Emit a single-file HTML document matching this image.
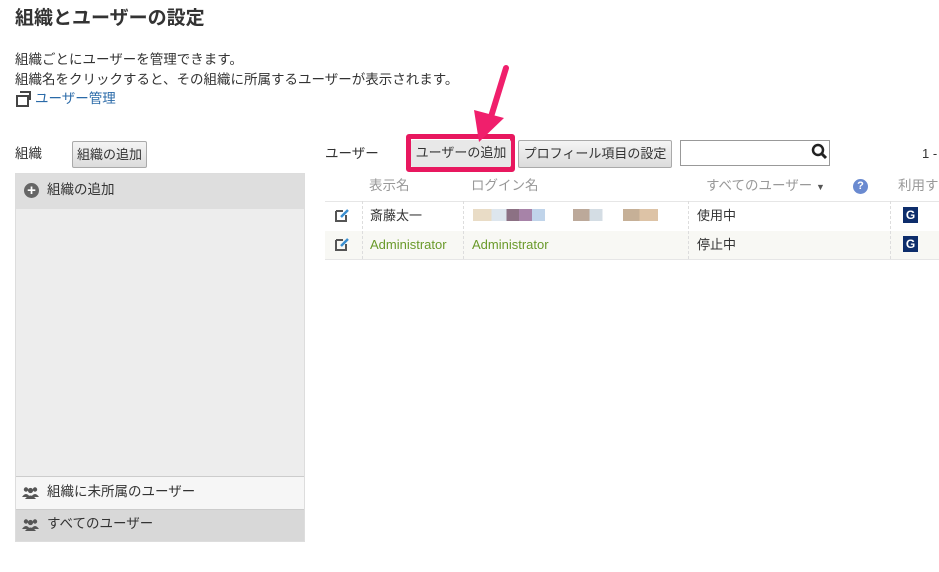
<!DOCTYPE html>
<html><head><meta charset="utf-8"><style>
body{margin:0;width:939px;height:572px;background:#fff;position:relative;overflow:hidden;font-family:"Liberation Sans","Noto Sans CJK JP",sans-serif;color:#333;font-size:13px}
.a{position:absolute;white-space:nowrap;line-height:16px}
.btn{position:absolute;border:1px solid #aaa;border-radius:2px;background:linear-gradient(#f4f4f4,#dcdcdc);font-size:13px;color:#333;text-align:center;box-sizing:border-box}
.g{display:inline-block;width:15px;height:16px;background:#0d2d6b;color:#fff;font-size:12px;font-weight:bold;text-align:center;line-height:16px}
</style></head><body>
<div class="a" style="left:15px;top:8px;font-size:19px;line-height:22px;font-weight:bold;color:#333">組織とユーザーの設定</div>
<div class="a" style="left:15px;top:50px;line-height:20px;font-size:13.5px">組織ごとにユーザーを管理できます。<br>組織名をクリックすると、その組織に所属するユーザーが表示されます。</div>
<div class="a" style="left:16px;top:95px;width:9px;height:8px;border:2px solid #444;background:#fff"></div>
<div class="a" style="left:20px;top:91px;width:9px;height:7px;border:2px solid #444;border-bottom:none;border-left:none"></div>
<div class="a" style="left:35px;top:91px;color:#2a6aa8;font-size:13.5px">ユーザー管理</div>

<div class="a" style="left:15px;top:146px;font-size:13.5px">組織</div>
<div class="btn" style="left:72px;top:141px;width:75px;height:27px;line-height:25px">組織の追加</div>
<div class="a" style="left:15px;top:173px;width:288px;height:367px;background:#ededed;border:1px solid #ddd"></div>
<div class="a" style="left:16px;top:174px;width:288px;height:35px;background:#dedede"></div>
<div class="a" style="left:24px;top:183px;width:15px;height:15px;border-radius:50%;background:#666;color:#fff;font-size:15px;line-height:15px;text-align:center;font-weight:bold">+</div>
<div class="a" style="left:47px;top:182px;font-size:13.5px">組織の追加</div>
<div class="a" style="left:16px;top:476px;width:288px;height:32px;background:#f6f6f6;border-top:1px solid #ccc;border-bottom:1px solid #ccc"></div>
<div class="a" style="left:16px;top:510px;width:288px;height:31px;background:#d8d8d8"></div>
<svg class="a" style="left:22px;top:486px" width="17" height="13"><circle cx="4" cy="3.5" r="2.2" fill="#555"/><circle cx="13" cy="3.5" r="2.2" fill="#555"/><circle cx="8.5" cy="4.5" r="2.6" fill="#555"/><path d="M0 11 Q4 5 8 11Z M9 11 Q13 5 17 11Z M3 13 Q8.5 6 14 13Z" fill="#555"/></svg>
<div class="a" style="left:47px;top:484px;font-size:13.5px">組織に未所属のユーザー</div>
<svg class="a" style="left:22px;top:518px" width="17" height="13"><circle cx="4" cy="3.5" r="2.2" fill="#555"/><circle cx="13" cy="3.5" r="2.2" fill="#555"/><circle cx="8.5" cy="4.5" r="2.6" fill="#555"/><path d="M0 11 Q4 5 8 11Z M9 11 Q13 5 17 11Z M3 13 Q8.5 6 14 13Z" fill="#555"/></svg>
<div class="a" style="left:47px;top:516px;font-size:13.5px">すべてのユーザー</div>

<div class="a" style="left:325px;top:146px;font-size:13.5px">ユーザー</div>
<div class="a" style="left:406px;top:134px;width:99px;height:28px;border:5px solid #e8185f;border-radius:3px"></div>
<div class="btn" style="left:411px;top:140px;width:100px;height:27px;line-height:25px;border:none;background:#e8e8e8">ユーザーの追加</div>
<div class="btn" style="left:518px;top:140px;width:154px;height:28px;line-height:26px">プロフィール項目の設定</div>
<div class="a" style="left:680px;top:140px;width:150px;height:26px;border:1px solid #999;box-sizing:border-box"></div>
<svg class="a" style="left:810px;top:142px" width="20" height="20"><circle cx="8" cy="8" r="5" fill="none" stroke="#222" stroke-width="2.5"/><line x1="11.5" y1="11.5" x2="16" y2="16" stroke="#222" stroke-width="3"/></svg>
<div class="a" style="left:922px;top:146px">1 -</div>

<div class="a" style="left:369px;top:178px;color:#999;font-size:13.5px">表示名</div>
<div class="a" style="left:471px;top:178px;color:#999;font-size:13.5px">ログイン名</div>
<div class="a" style="left:706px;top:178px;color:#999;font-size:13.5px">すべてのユーザー <span style="font-size:9px;color:#555">▼</span></div>
<div class="a" style="left:853px;top:179px;width:15px;height:15px;border-radius:50%;background:#6a8ad0;color:#fff;font-size:11px;font-weight:bold;text-align:center;line-height:15px">?</div>
<div class="a" style="left:898px;top:178px;color:#999;font-size:13.5px">利用す</div>

<div class="a" style="left:325px;top:201px;width:614px;height:29px;border-top:1px solid #e6e6e6;border-bottom:1px solid #e6e6e6"></div>
<div class="a" style="left:325px;top:231px;width:614px;height:28px;background:#f8f8f4;border-bottom:1px solid #e6e6e6"></div>
<div class="a" style="left:362px;top:201px;height:58px;border-left:1px dashed #ddd"></div>
<div class="a" style="left:463px;top:201px;height:58px;border-left:1px dashed #ddd"></div>
<div class="a" style="left:688px;top:201px;height:58px;border-left:1px dashed #ddd"></div>
<div class="a" style="left:890px;top:201px;height:58px;border-left:1px dashed #ddd"></div>
<svg class="a" style="left:334px;top:207px" width="16" height="16"><path d="M2 4h7M2 4v10h10v-6" fill="none" stroke="#555" stroke-width="2"/><path d="M7 10l7-7" stroke="#3a8fd0" stroke-width="2.5"/></svg>
<svg class="a" style="left:334px;top:236px" width="16" height="16"><path d="M2 4h7M2 4v10h10v-6" fill="none" stroke="#555" stroke-width="2"/><path d="M7 10l7-7" stroke="#3a8fd0" stroke-width="2.5"/></svg>
<div class="a" style="left:370px;top:208px">斎藤太一</div>
<div class="a" style="left:473px;top:209px;height:12px;width:185px;background:linear-gradient(90deg,#e9dcc6 0 10%,#dde6ee 10% 18%,#8c7184 18% 25%,#a783a8 25% 32%,#c0d4ea 32% 39%,#fff 39% 54%,#bca99a 54% 63%,#d4dde4 63% 70%,#fff 70% 81%,#c6b097 81% 90%,#ddc3a6 90% 100%)"></div>
<div class="a" style="left:697px;top:208px">使用中</div>
<div class="a" style="left:903px;top:207px"><span class="g">G</span></div>
<div class="a" style="left:370px;top:237px;color:#6a9a2a">Administrator</div>
<div class="a" style="left:472px;top:237px;color:#6a9a2a">Administrator</div>
<div class="a" style="left:697px;top:237px">停止中</div>
<div class="a" style="left:903px;top:236px"><span class="g">G</span></div>

<svg class="a" style="left:460px;top:60px" width="60" height="90"><path d="M46 8 L30 60" stroke="#f01f6c" stroke-width="6" fill="none" stroke-linecap="round"/><path d="M14 50 L19 82 L44 58 Z" fill="#f01f6c"/></svg>
</body></html>
